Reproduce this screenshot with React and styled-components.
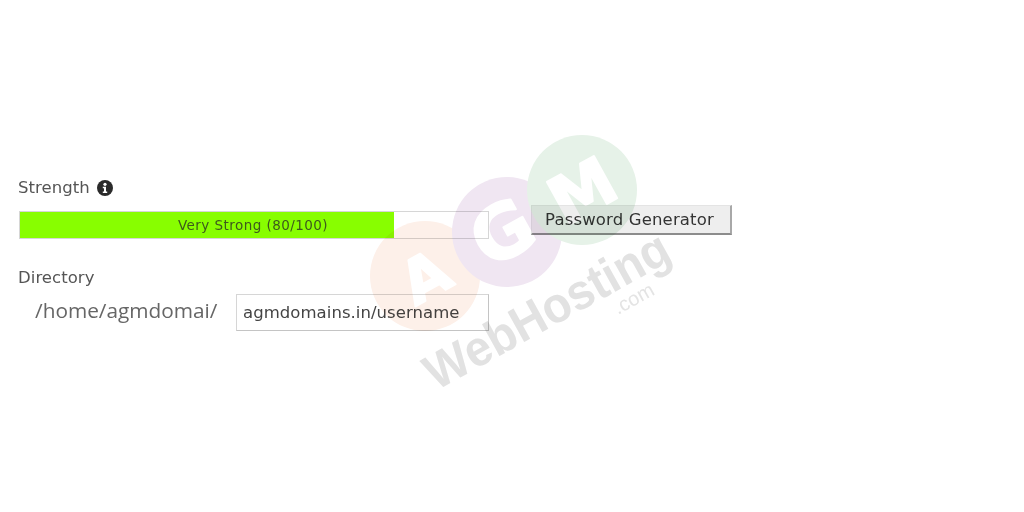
import React from 'react';
import styled, { createGlobalStyle } from 'styled-components';

const GlobalStyle = createGlobalStyle`
  html, body {
    margin: 0;
    padding: 0;
    background: #ffffff;
  }
`;

const Page = styled.div`
  position: relative;
  width: 1024px;
  height: 512px;
  overflow: hidden;
  box-sizing: border-box;
  padding: 177px 0 0 18px;
  font-family: "DejaVu Sans", Verdana, sans-serif;
  color: #555;
`;

const Label = styled.div`
  display: flex;
  align-items: center;
  gap: 7px;
  height: 20px;
  box-sizing: border-box;
  padding-top: 1px;
  font-size: 16.5px;
  letter-spacing: 0.05px;
  line-height: 20px;
`;

const StrengthRow = styled.div`
  display: flex;
  align-items: flex-start;
  margin: 8px 0 28px;
`;

const Meter = styled.div`
  position: relative;
  width: 470px;
  height: 28px;
  margin: 6px 0 0 1px;
  box-sizing: border-box;
  border: 1px solid #d6d6d6;
  background: #fff;
`;

const MeterFill = styled.div`
  height: 100%;
  background: #88fe00;
`;

const MeterText = styled.div`
  position: absolute;
  inset: 0 2px 0 0;
  display: flex;
  align-items: center;
  justify-content: center;
  font-size: 13.5px;
  letter-spacing: 0.45px;
  color: #3d5a1c;
`;

const GeneratorButton = styled.button`
  width: 201px;
  height: 30px;
  margin-left: 42px;
  padding: 0 3px 0 0;
  box-sizing: border-box;
  border: 1px solid #e4e4e4;
  border-right: 2px solid #a8a8a8;
  border-bottom: 2px solid #8c8c8c;
  background: #eeeeee;
  font-family: inherit;
  font-size: 16.5px;
  letter-spacing: 0.15px;
  color: #333;
`;

const DirectoryRow = styled.div`
  display: flex;
  align-items: center;
  margin: 7px 0 0 17px;
`;

const Prefix = styled.span`
  width: 201px;
  padding-bottom: 5px;
  font-family: "Open Sans", sans-serif;
  font-size: 20.8px;
  color: #666;
`;

const DirectoryInput = styled.div`
  width: 253px;
  height: 37px;
  box-sizing: border-box;
  padding-left: 6px;
  border: 1px solid #d6d6d6;
  border-right-color: #c4c4c4;
  border-bottom-color: #c4c4c4;
  font-size: 16.5px;
  letter-spacing: 0.05px;
  line-height: 35px;
  color: #444;
`;

const Watermark = styled.svg`
  position: absolute;
  left: 0;
  top: 0;
  width: 1024px;
  height: 512px;
  mix-blend-mode: multiply;
  pointer-events: none;
`;

const InfoIcon = () => (
  <svg width="16" height="16" viewBox="0 0 16 16">
    <circle cx="8" cy="8" r="8" fill="#2b2b2b" />
    <circle cx="8" cy="4.3" r="1.6" fill="#fff" />
    <path d="M5.8 6.8h3.2v4.6h1.2v1.5H5.8v-1.5H7V8.3H5.8z" fill="#fff" />
  </svg>
);

const letterStyle = {
  fontFamily: '"DejaVu Sans", sans-serif',
  fontWeight: 700,
  fill: '#fff',
  stroke: '#fff',
  strokeWidth: 2,
  strokeLinejoin: 'round',
};

const WatermarkLogo = () => (
  <Watermark viewBox="0 0 1024 512">
    <circle cx="425" cy="276" r="55" fill="#fdf0e9" />
    <circle cx="507" cy="232" r="55" fill="#f0e6f2" />
    <circle cx="582" cy="190" r="55" fill="#e6f2e8" />
    <text x="425" y="298" fontSize="60" textAnchor="middle" transform="rotate(-29 425 276)" style={letterStyle}>A</text>
    <text x="503" y="256" fontSize="74" textAnchor="middle" transform="rotate(-29 507 232)" style={letterStyle}>G</text>
    <text x="582" y="214" fontSize="66" textAnchor="middle" transform="rotate(-29 582 190)" style={letterStyle}>M</text>
    <text x="0" y="0" fontSize="50" transform="translate(436 391) rotate(-29)" fill="#e2e2e2" textLength="272" lengthAdjust="spacingAndGlyphs" style={{ fontFamily: '"Liberation Sans", sans-serif', fontWeight: 700 }}>WebHosting</text>
    <text x="0" y="0" fontSize="20" transform="translate(618 315) rotate(-29)" fill="#e4e4e4" style={{ fontFamily: '"Liberation Sans", sans-serif' }}>.com</text>
  </Watermark>
);

export default function App() {
  return (
    <Page>
      <GlobalStyle />
      <Label>Strength <InfoIcon /></Label>
      <StrengthRow>
        <Meter>
          <MeterFill style={{ width: '80%' }} />
          <MeterText>Very Strong (80/100)</MeterText>
        </Meter>
        <GeneratorButton>Password Generator</GeneratorButton>
      </StrengthRow>
      <Label>Directory</Label>
      <DirectoryRow>
        <Prefix>/home/agmdomai/</Prefix>
        <DirectoryInput>agmdomains.in/username</DirectoryInput>
      </DirectoryRow>
      <WatermarkLogo />
    </Page>
  );
}
